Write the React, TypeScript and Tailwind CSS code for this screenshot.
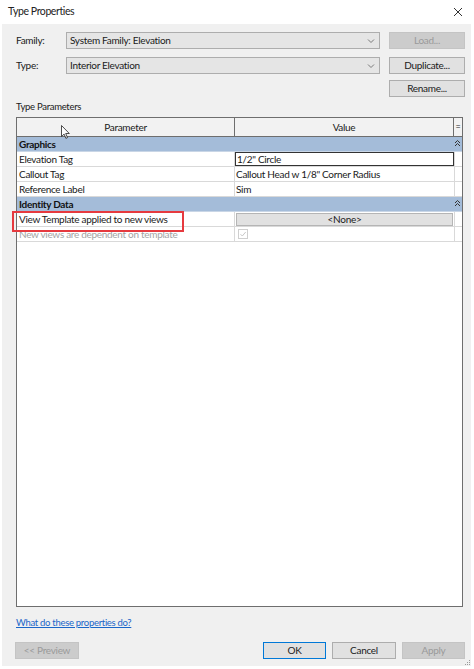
import React from 'react';

// Revit "Type Properties" dialog

type Row = { name: string; value?: string; kind?: 'box' | 'button' | 'check'; muted?: boolean };

const graphics: Row[] = [
  { name: 'Elevation Tag', value: '1/2" Circle', kind: 'box' },
  { name: 'Callout Tag', value: 'Callout Head w 1/8" Corner Radius' },
  { name: 'Reference Label', value: 'Sim' },
];

const identity: Row[] = [
  { name: 'View Template applied to new views', value: '<None>', kind: 'button' },
  { name: 'New views are dependent on template', kind: 'check', muted: true },
];

const Chevron = () => (
  <svg width="8" height="6" viewBox="0 0 8 6" className="text-[#7a7a7a]">
    <path d="M1 1.5l3 3 3-3" fill="none" stroke="currentColor" strokeWidth="1" />
  </svg>
);

const Collapse = () => (
  <svg width="7" height="8" viewBox="0 0 7 8" className="text-[#333]">
    <path d="M1 4l2.5-2.5L6 4M1 7l2.5-2.5L6 7" fill="none" stroke="currentColor" strokeWidth="1" />
  </svg>
);

const Btn: React.FC<{ label: string; disabled?: boolean; primary?: boolean }> = ({ label, disabled, primary }) => (
  <div
    className={
      'h-[17px] flex items-center justify-center border ' +
      (disabled
        ? 'bg-[#cccccc] border-[#c4c4c4] text-[#9a9a9a]'
        : primary
          ? 'bg-[#e1e1e1] border-[#0078d7] text-[#1a1a1a]'
          : 'bg-[#e1e1e1] border-[#adadad] text-[#1a1a1a]')
    }
  >
    {label}
  </div>
);

const Select: React.FC<{ label: string; value: string }> = ({ label, value }) => (
  <div className="flex items-center h-[17px]">
    <div className="w-[50px]">{label}</div>
    <div className="w-[314px] h-[17px] bg-[#e5e5e5] border border-[#adadad] flex items-center justify-between pl-[3px] pr-[4px]">
      <span>{value}</span>
      <Chevron />
    </div>
  </div>
);

const GroupRow: React.FC<{ title: string }> = ({ title }) => (
  <div className="h-[15px] flex bg-[#a4bcd9] border-b border-[#c9d6e6]">
    <div className="flex-1 pl-[2px] font-bold leading-[15px] text-[#111]">{title}</div>
    <div className="w-[10px] flex items-start justify-center pt-[2px]">
      <Collapse />
    </div>
  </div>
);

const DataRow: React.FC<{ row: Row }> = ({ row }) => (
  <div className="h-[15px] flex border-b border-[#d9d9d9]">
    <div className={'w-[218px] pl-[2px] leading-[14px] whitespace-nowrap border-r border-[#d9d9d9] ' + (row.muted ? 'text-[#a3a3a3]' : 'text-[#1a1a1a]')}>
      {row.name}
    </div>
    <div className="w-[219px] relative">
      {row.kind === 'box' && (
        <div className="absolute inset-0 border border-[#333] pl-[1px] leading-[13px]">{row.value}</div>
      )}
      {row.kind === 'button' && (
        <div className="mx-[1px] mt-[1px] h-[13px] bg-[#e1e1e1] border border-[#b5b5b5] flex items-center justify-center">
          {row.value}
        </div>
      )}
      {row.kind === 'check' && (
        <div className="ml-[3px] mt-[2px] w-[10px] h-[10px] border border-[#cfcfcf] bg-white flex items-center justify-center">
          <svg width="8" height="8" viewBox="0 0 8 8">
            <path d="M1.5 4.2l1.8 1.8L6.7 2" fill="none" stroke="#c8c8c8" strokeWidth="1" />
          </svg>
        </div>
      )}
      {!row.kind && <div className="pl-[1px] leading-[14px] whitespace-nowrap">{row.value}</div>}
    </div>
    <div className="flex-1 border-l border-[#d9d9d9]" />
  </div>
);

export default function App() {
  return (
    <div className="w-[474px] h-[669px] bg-white relative overflow-hidden font-['Lato',sans-serif] text-[10px] tracking-[-0.3px] text-[#1a1a1a]">
      {/* title bar */}
      <div className="h-[24px] flex items-center justify-between pl-[8px] pr-[11px]">
        <span className="text-[10.5px] tracking-[-0.4px] text-[#222]">Type Properties</span>
        <svg width="10" height="10" viewBox="0 0 10 10">
          <path d="M1 1l8 8M9 1l-8 8" stroke="#333" strokeWidth="1" />
        </svg>
      </div>

      {/* body */}
      <div className="ml-[2px] w-[469px] h-[642px] bg-[#f0f0f0] pl-[14px] pt-[8px] flex flex-col">
        <div className="flex items-center">
          <Select label="Family:" value="System Family: Elevation" />
          <div className="ml-[9px] w-[76px]">
            <Btn label="Load..." disabled />
          </div>
        </div>
        <div className="flex items-center mt-[8px]">
          <Select label="Type:" value="Interior Elevation" />
          <div className="ml-[9px] w-[76px]">
            <Btn label="Duplicate..." />
          </div>
        </div>
        <div className="flex mt-[6px]">
          <div className="ml-[373px] w-[76px]">
            <Btn label="Rename..." />
          </div>
        </div>

        <div className="mt-[4px] h-[12px] leading-[12px] text-[9.5px]">Type Parameters</div>

        {/* parameter grid */}
        <div className="mt-[4px] w-[447px] h-[490px] bg-white border border-[#6e6e6e] relative">
          <div className="h-[19px] flex border-b border-[#6e6e6e] bg-[#f2f2f2]">
            <div className="w-[218px] flex items-center justify-center border-r border-[#6e6e6e]">Parameter</div>
            <div className="w-[219px] flex items-center justify-center border-r border-[#6e6e6e]">Value</div>
            <div className="flex-1 flex items-center justify-center text-[9px]">=</div>
          </div>
          <GroupRow title="Graphics" />
          {graphics.map((r) => (
            <DataRow key={r.name} row={r} />
          ))}
          <GroupRow title="Identity Data" />
          {identity.map((r) => (
            <DataRow key={r.name} row={r} />
          ))}

          {/* highlight annotation */}
          <div className="absolute left-[-5px] top-[93px] w-[172px] h-[21px] border-2 border-[#e63a3f]" />

          {/* mouse pointer */}
          <svg className="absolute left-[44px] top-[7px]" width="9" height="14" viewBox="0 0 9 14">
            <path d="M0.5 0.5v11l2.6-2.4 1.8 4.2 1.6-0.7-1.8-4.1h3.6z" fill="white" stroke="#222" strokeWidth="0.8" />
          </svg>
        </div>

        <div className="mt-[10px] h-[12px] leading-[12px] text-[9.5px] text-[#1a66c9] underline">What do these properties do?</div>

        <div className="mt-[13px] flex">
          <div className="ml-[-1px] w-[64px]">
            <Btn label="<< Preview" disabled />
          </div>
          <div className="ml-[184px] w-[63px]">
            <Btn label="OK" primary />
          </div>
          <div className="ml-[6px] w-[64px]">
            <Btn label="Cancel" />
          </div>
          <div className="ml-[6px] w-[63px]">
            <Btn label="Apply" disabled />
          </div>
        </div>
      </div>

      {/* size grip */}
      <svg className="absolute right-[3px] bottom-[3px]" width="6" height="6" viewBox="0 0 6 6">
        <rect x="4" y="0" width="1" height="1" fill="#9a9a9a" />
        <rect x="2" y="2" width="1" height="1" fill="#9a9a9a" />
        <rect x="4" y="2" width="1" height="1" fill="#9a9a9a" />
        <rect x="0" y="4" width="1" height="1" fill="#9a9a9a" />
        <rect x="2" y="4" width="1" height="1" fill="#9a9a9a" />
        <rect x="4" y="4" width="1" height="1" fill="#9a9a9a" />
      </svg>
    </div>
  );
}
